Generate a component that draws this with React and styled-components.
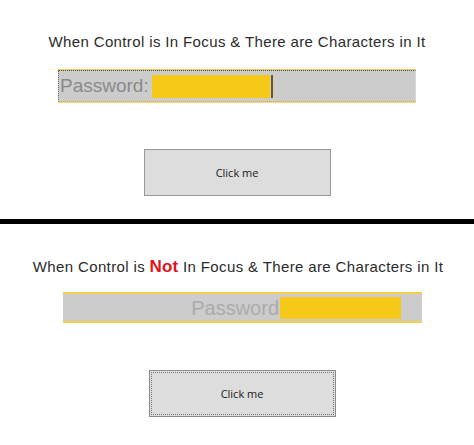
import React from "react";
import styled, { createGlobalStyle } from "styled-components";

const GlobalStyle = createGlobalStyle`
  html, body {
    margin: 0;
    padding: 0;
    background: #ffffff;
  }
`;

const Page = styled.div`
  width: 474px;
  height: 445px;
  display: flex;
  flex-direction: column;
  overflow: hidden;
  font-family: "Liberation Sans", Arial, sans-serif;
`;

const Panel = styled.section`
  height: ${(p) => p.$height}px;
  display: flex;
  flex-direction: column;
  align-items: center;
  padding-top: ${(p) => p.$top}px;
  box-sizing: border-box;
`;

const Title = styled.h2`
  margin: 0 0 0 ${(p) => p.$shift || 0}px;
  font-size: 15px;
  font-weight: 400;
  line-height: 18px;
  color: #2b2b2b;
  white-space: nowrap;
  letter-spacing: 0.37px;
`;

const Strong = styled.span`
  color: #e3141c;
  font-weight: 700;
  font-size: 17px;
  letter-spacing: 0.2px;
`;

const Field = styled.div`
  display: flex;
  align-items: center;
  box-sizing: border-box;
  width: ${(p) => p.$width}px;
  height: ${(p) => p.$height}px;
  margin: ${(p) => p.$mt}px 0 0 ${(p) => p.$shift || 0}px;
  background: #cccccc;
  justify-content: ${(p) => (p.$focused ? "flex-start" : "flex-end")};
  padding: ${(p) => (p.$focused ? "0 0 0 1px" : "0 21px 0 0")};

  ${(p) =>
    p.$focused
      ? `
    border-top: 1px dotted #4c4a2a;
    border-left: 1px dotted #6a6a6a;
    border-bottom: 1px dotted #d9a81e;
    border-right: 1px solid #d8d8d8;
    box-shadow: 0 -1px 0 #f2cd45, 0 1px 0 #f6dc80;
  `
      : `
    border-top: 2px solid #f4cf48;
    border-bottom: 2px solid #f4cf48;
  `}
`;

const Label = styled.span`
  font-size: ${(p) => (p.$focused ? 19 : 20)}px;
  line-height: 22px;
  color: ${(p) => (p.$focused ? "#8a8a8a" : "#ababab")};
`;

const Mask = styled.span`
  display: block;
  width: ${(p) => p.$width}px;
  height: ${(p) => p.$height}px;
  margin-left: ${(p) => p.$gap}px;
  background: #f6c919;
`;

const Caret = styled.span`
  display: block;
  width: 2px;
  height: 23px;
  margin-left: 1px;
  background: #6b5a1a;
`;

const Button = styled.button`
  width: 187px;
  height: 47px;
  margin: ${(p) => p.$mt}px 0 0 ${(p) => p.$shift || 0}px;
  background: #dddddd;
  border: 1px solid #999999;
  font-family: "Open Sans", "Liberation Sans", sans-serif;
  font-size: 11px;
  color: #1a1a1a;
  padding: 0;
  cursor: pointer;
  ${(p) =>
    p.$dotted &&
    `
    outline: 1px dotted #777777;
    outline-offset: -3px;
    border-color: #8c8c8c;
  `}
`;

const Divider = styled.hr`
  width: 100%;
  height: 5px;
  margin: 0;
  border: none;
  background: #000000;
  flex-shrink: 0;
`;

export default function App() {
  return (
    <>
      <GlobalStyle />
      <Page>
        <Panel $height={219} $top={33}>
          <Title>When Control is In Focus &amp; There are Characters in It</Title>
          <Field $focused $width={358} $height={32} $mt={19}>
            <Label $focused>Password:</Label>
            <Mask $width={118} $height={23} $gap={3} />
            <Caret />
          </Field>
          <Button $mt={47}>Click me</Button>
        </Panel>
        <Divider />
        <Panel $height={221} $top={34}>
          <Title $shift={2}>
            When Control is <Strong>Not</Strong> In Focus &amp; There are Characters in It
          </Title>
          <Field $width={359} $height={31} $mt={16} $shift={11}>
            <Label>Password</Label>
            <Mask $width={121} $height={22} $gap={1} />
          </Field>
          <Button $dotted $mt={47} $shift={10}>
            Click me
          </Button>
        </Panel>
      </Page>
    </>
  );
}
